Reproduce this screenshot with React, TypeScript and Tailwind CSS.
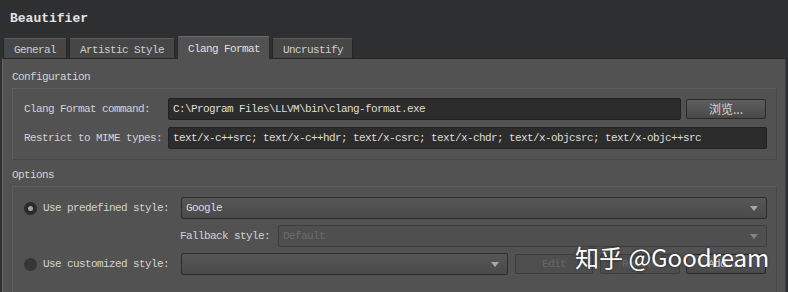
import React from "react";

const TABS = [
  { label: "General", w: "w-[64px]" },
  { label: "Artistic Style", w: "w-[106px]" },
  { label: "Clang Format", w: "w-[93px]", active: true },
  { label: "Uncrustify", w: "w-[81px]" },
];

const MIME =
  "text/x-c++src; text/x-c++hdr; text/x-csrc; text/x-chdr; text/x-objcsrc; text/x-objc++src";

function Arrow() {
  return (
    <svg width="8" height="5" viewBox="0 0 8 5" className="shrink-0">
      <path d="M0 0 L8 0 L4 5 Z" fill="#a8a8a8" />
    </svg>
  );
}

function Combo({ value, className, disabled }: { value: string; className: string; disabled?: boolean }) {
  return (
    <div
      className={`${className} h-[22px] flex items-center justify-between pl-[4px] pr-[8px] rounded-[2px] border ${
        disabled
          ? "border-[#3e3e3e] bg-[#4f4f4f] text-[#6c6c6c]"
          : "border-[#2c2c2c] bg-gradient-to-b from-[#565656] to-[#4a4a4a] text-[#dcdcdc]"
      }`}
    >
      <span>{value}</span>
      <span className={disabled ? "opacity-60" : ""}>
        <Arrow />
      </span>
    </div>
  );
}

function Btn({ label, className, disabled }: { label: string; className: string; disabled?: boolean }) {
  return (
    <div
      className={`${className} h-[20px] flex items-center justify-center rounded-[2px] border ${
        disabled
          ? "border-[#3c3c3c] bg-[#4e4e4e] text-[#666666]"
          : "border-[#2a2a2a] bg-gradient-to-b from-[#5e5e5e] to-[#494949] text-[#d6d6d6]"
      }`}
    >
      {label}
    </div>
  );
}

export default function App() {
  return (
    <div className="relative w-[788px] h-[292px] overflow-hidden bg-[#2e2f31] font-['Liberation_Mono','Noto_Sans_CJK_SC',monospace] text-[11px] tracking-[-0.6px] text-[#d2d2d2]">
      <div className="h-[36px] pl-[10px] pt-[11px] text-[13px] tracking-[0px] font-bold text-[#e4e4e4] leading-[16px]">
        Beautifier
      </div>

      {/* tab bar */}
      <div className="flex items-end h-[22px] pl-[3px] gap-[2px]">
        {TABS.map((t) =>
          t.active ? (
            <div
              key={t.label}
              className={`${t.w} h-[23px] -mb-[1px] pl-[10px] pt-[4px] rounded-t-[2px] border border-b-0 border-[#2a2a2a] border-t-[#6a6a6a] bg-[#525252] text-[#e0e0e0] z-10`}
            >
              {t.label}
            </div>
          ) : (
            <div
              key={t.label}
              className={`${t.w} h-[20px] pl-[10px] pt-[3px] rounded-t-[2px] border border-b-0 border-[#262626] border-t-[#5a5a5a] bg-[#464646] text-[#cfcfcf]`}
            >
              {t.label}
            </div>
          )
        )}
      </div>

      {/* panel */}
      <div className="ml-[2px] mr-[2px] h-[240px] bg-[#525252] border-t border-l border-r border-t-[#262626] border-l-[#686868] border-r-[#3e3e3e] pl-[9px] pr-[8px] pt-[10px]">
        <div className="h-[16px] leading-[16px]">Configuration</div>
        <div className="mt-[3px] border border-[#5d5d5d] border-b-[#474747] border-r-[#474747] h-[72px] pl-[11px] pr-[9px] pt-[9px] flex flex-col gap-[7px]">
          <div className="flex items-center">
            <div className="w-[144px]">Clang Format command:</div>
            <div className="w-[513px] h-[22px] flex items-center pl-[4px] rounded-[2px] bg-[#2c2c2c] border border-[#222222] text-[#dedede]">
              C:\Program Files\LLVM\bin\clang-format.exe
            </div>
            <Btn label="浏览..." className="ml-[5px] w-[80px] tracking-[0px] font-['Noto_Sans_CJK_SC',sans-serif] text-[12px]" />
          </div>
          <div className="flex items-center">
            <div className="w-[144px]">Restrict to MIME types:</div>
            <div className="w-[599px] h-[22px] flex items-center pl-[4px] rounded-[2px] bg-[#2c2c2c] border border-[#222222] text-[#dedede]">
              {MIME}
            </div>
          </div>
        </div>

        <div className="mt-[7px] h-[16px] leading-[16px]">Options</div>
        <div className="mt-[3px] border border-[#5d5d5d] border-r-[#474747] h-[120px] pl-[11px] pr-[9px] pt-[10px] flex flex-col gap-[6px]">
          <div className="flex items-center">
            <div className="w-[13px] h-[13px] rounded-full bg-[#2a2a2a] flex items-center justify-center">
              <div className="w-[5px] h-[5px] rounded-full bg-[#a4a4a4]" />
            </div>
            <div className="ml-[6px] w-[138px]">Use predefined style:</div>
            <Combo value="Google" className="w-[586px]" />
          </div>
          <div className="flex items-center">
            <div className="ml-[156px] w-[98px]">Fallback style:</div>
            <Combo value="Default" className="w-[489px]" disabled />
          </div>
          <div className="flex items-center">
            <div className="w-[13px] h-[13px] rounded-full bg-[#363636]" />
            <div className="ml-[6px] w-[138px]">Use customized style:</div>
            <Combo value="" className="w-[327px]" />
            <Btn label="Edit" className="ml-[7px] w-[78px]" disabled />
            <Btn label="Remove" className="ml-[7px] w-[80px] text-[#5e5e5e]" disabled />
            <Btn label="Add..." className="ml-[6px] w-[80px]" />
          </div>
        </div>
      </div>

      {/* watermark */}
      <div className="absolute left-[575px] top-[243px] text-[24px] leading-[28px] tracking-[0px] text-white font-['Noto_Sans_CJK_SC','Noto_Sans',sans-serif] [text-shadow:0_0_3px_rgba(0,0,0,0.6)] z-20">
        知乎 @Goodream
      </div>
    </div>
  );
}
